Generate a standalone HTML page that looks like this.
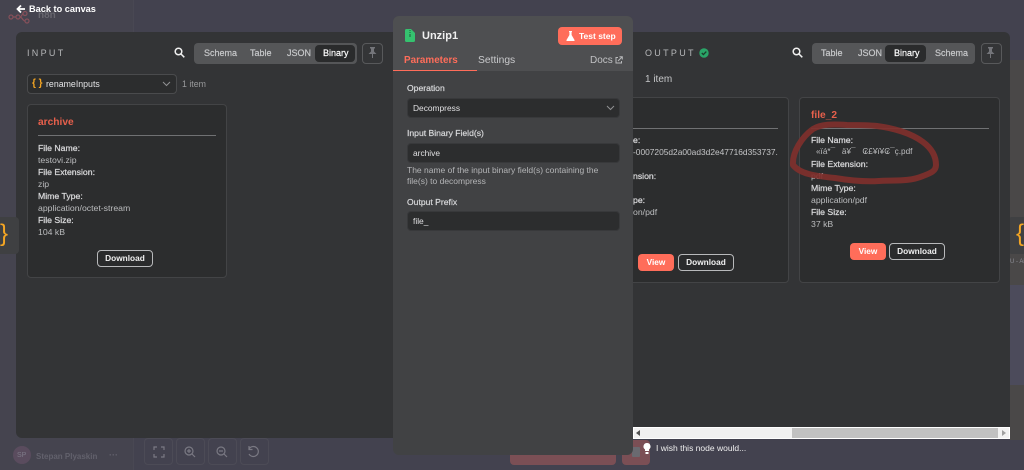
<!DOCTYPE html>
<html><head><meta charset="utf-8">
<style>
html,body{margin:0;padding:0}
body{width:1024px;height:470px;overflow:hidden;background:#43424f;position:relative;font-family:"Liberation Sans",sans-serif;color:#d8d8da}
div,span{position:absolute;white-space:nowrap;box-sizing:border-box}
.t{font-size:8.7px;line-height:12px}
.b{color:#d8d8da;-webkit-text-stroke:.25px #d8d8da}
.seg{background:#555658;border-radius:4px;height:21px;top:43px}
.tab{font-size:9px;color:#c8c9cb;top:47px;line-height:12px;-webkit-text-stroke:.2px #c8c9cb}
.act{background:#2a2b2c;border-radius:4px;height:17px;top:45px}
.pin{border:1px solid #58595b;border-radius:4px;width:21px;height:21px;top:43px;background:#343537}
.card{background:#2c2d2e;border:1px solid #434446;border-radius:4px}
.hr{height:1px;background:#707173}
.name{font-size:10.2px;font-weight:bold;color:#e8604c;line-height:14px}
.dl{border:1px solid #b8b9bb;background:#2a2b2c;border-radius:4px;font-size:8.3px;font-weight:bold;color:#f0f0f0;text-align:center;line-height:15px;height:17px;width:56px}
.view{background:#ff6d5a;border-radius:4px;font-size:8.3px;font-weight:bold;color:#fff;text-align:center;line-height:17px;height:17px;width:36px}
.lbl{font-size:8.6px;color:#d8d9db;line-height:12px;left:407px;-webkit-text-stroke:.2px #d8d9db}
.inp{left:407px;width:213px;height:20px;background:#2c2d2e;border:1px solid #38393b;border-radius:4px;font-size:8.4px;color:#e0e0e2;padding-left:5px;line-height:19px}
</style></head><body>
<!-- canvas -->
<div style="left:0;top:0;width:134px;height:470px;background:#45444f"></div>
<div style="left:133px;top:0;width:1px;height:470px;background:#494853"></div>
<svg style="position:absolute;left:8px;top:11px" width="26" height="14" viewBox="0 0 26 14" fill="none" stroke="#85505a" stroke-width="1.2"><circle cx="3" cy="6" r="2"/><circle cx="10" cy="6" r="2"/><circle cx="17" cy="2.500" r="2"/><circle cx="19" cy="10" r="2"/><path d="M5 6h3M12 6c2 0 2-3.500 3-3.500M12 6c2 0 3 4 5 4"/></svg>
<div style="left:38px;top:10px;font-size:10px;font-weight:bold;color:#68676f;line-height:12px">n8n</div>
<svg style="position:absolute;left:16px;top:4px" width="10" height="10" viewBox="0 0 10 10" fill="none" stroke="#fff" stroke-width="1.800"><path d="M9 5H2M5 1.500 1.500 5 5 8.500"/></svg>
<div style="left:29px;top:3px;font-size:9.2px;font-weight:bold;color:#fff;line-height:12px">Back to canvas</div>

<!-- bottom bar -->
<div style="left:13px;top:446px;width:18px;height:18px;border-radius:50%;background:#5a4c5e"></div>
<div style="left:17px;top:451px;font-size:7px;color:#7d7a88;line-height:9px">SP</div>
<div style="left:36px;top:451px;font-size:8px;font-weight:bold;color:#62616c;line-height:11px">Stepan Plyaskin</div>
<div style="left:109px;top:451px;font-size:9px;font-weight:bold;color:#62616c;line-height:9px">···</div>
<div style="left:144px;top:438px;width:29px;height:27px;border:1px solid #4c4b56;border-radius:4px"></div>
<div style="left:176px;top:438px;width:29px;height:27px;border:1px solid #4c4b56;border-radius:4px"></div>
<div style="left:208px;top:438px;width:29px;height:27px;border:1px solid #4c4b56;border-radius:4px"></div>
<div style="left:240px;top:438px;width:29px;height:27px;border:1px solid #4c4b56;border-radius:4px"></div>
<svg style="position:absolute;left:144px;top:438px" width="126" height="27" viewBox="0 0 126 27" fill="none" stroke="#7a7983" stroke-width="1.200"><path d="M10 12V9h3M17 9h3v3M20 16v3h-3M13 19h-3v-3"/><circle cx="45" cy="13" r="4"/><path d="M48 16l3 3M43 13h4M45 11v4"/><circle cx="77" cy="13" r="4"/><path d="M80 16l3 3M75 13h4"/><path d="M105 11a5 5 0 1 1 0 5M105 8v3.500h3.500"/></svg>

<div style="left:510px;top:440px;width:106px;height:25px;background:#7b4f55;border-radius:4px"></div>
<div style="left:622px;top:440px;width:28px;height:25px;background:#7b4f55;border-radius:4px"></div>
<div style="left:632px;top:447px;width:8px;height:10px;background:#6a6a70;border-radius:1px"></div>
<svg style="position:absolute;left:642px;top:442px" width="10" height="14" viewBox="0 0 10 14"><path d="M5 1a3.500 3.500 0 0 0-2 6.400V9h4V7.400A3.500 3.500 0 0 0 5 1z" fill="#fff"/><rect x="3.500" y="10" width="3" height="2" fill="#fff"/></svg>
<div style="left:656px;top:442px;font-size:8.5px;color:#eeeeee;line-height:12px">I wish this node would...</div>

<!-- right canvas pieces -->
<div style="left:1010px;top:60px;width:14px;height:380px;background:#4a4848"></div>
<div style="left:1010px;top:285px;width:14px;height:100px;background:#4c4b5b"></div>
<div style="left:1010px;top:258px;font-size:6px;color:#8d8d95;line-height:8px">U - Ai</div>
<div style="left:1008px;top:217px;width:16px;height:37px;background:#3f4042;border-radius:4px 0 0 4px"></div>
<div style="left:1016px;top:220px;font-size:24px;color:#f5a623;line-height:28px">{</div>

<!-- input panel -->
<div style="left:16px;top:32px;width:380px;height:406px;background:#333436;border-radius:6px 0 0 6px"></div>
<div style="left:0;top:217px;width:19px;height:37px;background:#3f4042;border-radius:0 4px 4px 0"></div>
<div style="left:0;top:220px;font-size:24px;color:#f5a623;line-height:28px">}</div>
<div style="left:27px;top:47px;font-size:9px;letter-spacing:2.3px;color:#b6b7b9;line-height:12px">INPUT</div>
<svg style="position:absolute;left:174px;top:47px" width="11" height="11" viewBox="0 0 11 11" fill="none" stroke="#f0f0f0" stroke-width="1.500"><circle cx="4.500" cy="4.500" r="3.300"/><path d="M7 7l3.300 3.300"/></svg>
<div class="seg" style="left:194px;width:163px"></div>
<div class="act" style="left:315px;width:40px"></div>
<div class="tab" style="left:204px">Schema</div>
<div class="tab" style="left:250px">Table</div>
<div class="tab" style="left:287px">JSON</div>
<div class="tab" style="left:323px;color:#fff;-webkit-text-stroke:.2px #fff">Binary</div>
<div class="pin" style="left:362px"></div>
<svg style="position:absolute;left:368px;top:47px" width="9" height="11" viewBox="0 0 9 11"><path d="M2 0h5v1L6 2v2.500L8.500 7H5v4H4V7H.5L3 4.500V2L2 1z" fill="#74757a"/></svg>
<div style="left:27px;top:74px;width:150px;height:20px;background:#2c2d2e;border:1px solid #4a4b4d;border-radius:4px"></div>
<div style="left:32px;top:77px;font-size:10px;font-weight:bold;color:#f5a623;line-height:13px">{ }</div>
<div style="left:46px;top:78px;font-size:8.8px;color:#e4e4e6;line-height:12px">renameInputs</div>
<svg style="position:absolute;left:162px;top:81px" width="9" height="6" viewBox="0 0 9 6" fill="none" stroke="#909193"><path d="M1 1l3.500 3.500L8 1"/></svg>
<div style="left:182px;top:78px;font-size:8.8px;color:#98999b;line-height:12px">1 item</div>
<div class="card" style="left:27px;top:104px;width:200px;height:174px"></div>
<div class="name" style="left:38px;top:116px">archive</div>
<div class="hr" style="left:38px;top:135px;width:178px"></div>
<div class="t b" style="left:38px;top:142px">File Name:</div>
<div class="t" style="left:38px;top:154px;color:#bcbdbf">testovi.zip</div>
<div class="t b" style="left:38px;top:166px">File Extension:</div>
<div class="t" style="left:38px;top:178px;color:#bcbdbf">zip</div>
<div class="t b" style="left:38px;top:190px">Mime Type:</div>
<div class="t" style="left:38px;top:202px;color:#bcbdbf">application/octet-stream</div>
<div class="t b" style="left:38px;top:214px">File Size:</div>
<div class="t" style="left:38px;top:226px;color:#bcbdbf">104 kB</div>
<div class="dl" style="left:97px;top:250px">Download</div>

<!-- output panel -->
<div style="left:620px;top:32px;width:390px;height:406px;background:#333436;border-radius:0 6px 6px 0"></div>
<div style="left:645px;top:47px;font-size:9px;letter-spacing:2.3px;color:#b6b7b9;line-height:12px">OUTPUT</div>
<svg style="position:absolute;left:699px;top:48px" width="10" height="10" viewBox="0 0 10 10"><circle cx="5" cy="5" r="4.700" fill="#2aa568"/><path d="M2.800 5l1.600 1.600L7.300 3.600" fill="none" stroke="#1c3b2b" stroke-width="1.300"/></svg>
<svg style="position:absolute;left:792px;top:47px" width="11" height="11" viewBox="0 0 11 11" fill="none" stroke="#f0f0f0" stroke-width="1.500"><circle cx="4.500" cy="4.500" r="3.300"/><path d="M7 7l3.300 3.300"/></svg>
<div class="seg" style="left:812px;width:163px"></div>
<div class="act" style="left:885px;width:41px"></div>
<div class="tab" style="left:821px">Table</div>
<div class="tab" style="left:858px">JSON</div>
<div class="tab" style="left:894px;color:#fff;-webkit-text-stroke:.2px #fff">Binary</div>
<div class="tab" style="left:935px">Schema</div>
<div class="pin" style="left:981px"></div>
<div style="left:645px;top:74px;font-size:10px;color:#c5c6c8;line-height:12px">1 item</div>
<svg style="position:absolute;left:986px;top:47px" width="9" height="11" viewBox="0 0 9 11"><path d="M2 0h5v1L6 2v2.500L8.500 7H5v4H4V7H.5L3 4.500V2L2 1z" fill="#74757a"/></svg>

<div class="card" style="left:600px;top:97px;width:189px;height:186px"></div>
<div class="hr" style="left:610px;top:128px;width:168px"></div>
<div class="t b" style="left:633px;top:134px">e:</div>
<div class="t" style="left:633px;top:146px;color:#c4c5c7;font-size:8.4px">-0007205d2a00ad3d2e47716d353737.</div>
<div class="t b" style="left:633px;top:170px">nsion:</div>
<div class="t b" style="left:633px;top:194px">pe:</div>
<div class="t" style="left:633px;top:206px;color:#bcbdbf">on/pdf</div>
<div class="view" style="left:638px;top:254px">View</div>
<div class="dl" style="left:678px;top:254px">Download</div>

<div class="card" style="left:799px;top:97px;width:201px;height:186px"></div>
<div class="name" style="left:811px;top:109px">file_2</div>
<div class="hr" style="left:811px;top:128px;width:178px"></div>
<div class="t b" style="left:811px;top:134px">File Name:</div>
<div class="t" style="left:816px;top:146px;color:#bcbdbf;font-size:8.2px">«ïá*¯&nbsp;&nbsp;&nbsp;ä¥¯&nbsp;&nbsp;&nbsp;₢£¥ï¥₢¯ç.pdf</div>
<div class="t b" style="left:811px;top:158px">File Extension:</div>
<div class="t" style="left:811px;top:170px;color:#bcbdbf">pdf</div>
<div class="t b" style="left:811px;top:182px">Mime Type:</div>
<div class="t" style="left:811px;top:194px;color:#bcbdbf">application/pdf</div>
<div class="t b" style="left:811px;top:206px">File Size:</div>
<div class="t" style="left:811px;top:218px;color:#bcbdbf">37 kB</div>
<div class="view" style="left:850px;top:243px">View</div>
<div class="dl" style="left:889px;top:243px">Download</div>
<svg style="position:absolute;left:785px;top:118px" width="160" height="70" viewBox="0 0 160 70" fill="none"><path d="M62 7C48 6 36 6 28 11 17 19 7 34 8 47 15 56 30 58 50 60 62 62 80 64 94 63 108 62 124 64 138 58 146 55 151 53 151 47 151 37 146 30 138 24 126 15 108 10 92 8 82 7 72 7 62 7z" stroke="#7f302d" stroke-width="6" stroke-linejoin="round" opacity=".92"/></svg>

<!-- scrollbar -->
<div style="left:633px;top:427px;width:377px;height:12px;background:#fff"></div>
<div style="left:634px;top:428px;width:375px;height:10px;background:#f1f1f1"></div>
<div style="left:792px;top:428px;width:206px;height:10px;background:#c1c1c1"></div>
<svg style="position:absolute;left:636px;top:430px" width="5" height="6" viewBox="0 0 5 6"><path d="M4 0v6L0 3z" fill="#505050"/></svg>
<svg style="position:absolute;left:1002px;top:430px" width="5" height="6" viewBox="0 0 5 6"><path d="M0 0v6l4-3z" fill="#a0a0a0"/></svg>

<!-- middle panel -->
<div style="left:393px;top:16px;width:240px;height:439px;background:#414244;border-radius:6px"></div>
<div style="left:393px;top:16px;width:240px;height:55px;background:#4e4f51;border-radius:6px 6px 0 0"></div>
<svg style="position:absolute;left:405px;top:29px" width="10" height="13" viewBox="0 0 10 13"><path d="M0 1.500A1.500 1.500 0 0 1 1.500 0H6l4 4v7.500A1.500 1.500 0 0 1 8.500 13h-7A1.500 1.500 0 0 1 0 11.500z" fill="#35c26f"/><path d="M4.500 1h1v1h-1zM4.500 3h1v1h-1zM4.500 5h1v3h-1z" fill="#1b5a38"/></svg>
<div style="left:422px;top:29px;font-size:11px;font-weight:bold;color:#f0f0f0;line-height:14px">Unzip1</div>
<div style="left:558px;top:27px;width:64px;height:18px;background:#ff6d5a;border-radius:4px"></div>
<svg style="position:absolute;left:566px;top:31px" width="9" height="10" viewBox="0 0 9 10"><path d="M3 0h3v1h-.4v3L8.500 9v1H.5V9l2.900-5V1H3z" fill="#fff"/></svg>
<div style="left:579px;top:30px;font-size:8.500px;font-weight:bold;color:#fff;line-height:12px">Test step</div>
<div style="left:404px;top:54px;font-size:9.900px;font-weight:bold;color:#ff6d5a;line-height:13px">Parameters</div>
<div style="left:478px;top:54px;font-size:10.300px;color:#c9cacc;line-height:13px">Settings</div>
<div style="left:590px;top:54px;font-size:10px;color:#c0c1c3;line-height:13px">Docs</div>
<svg style="position:absolute;left:615px;top:56px" width="8" height="8" viewBox="0 0 8 8" fill="none" stroke="#b8b9bb"><path d="M3 1.500H1v5.500h5.500V5M3 5l4-4M4.500 .7H7.300V3.500"/></svg>
<div style="left:393px;top:70px;width:84px;height:1px;background:#ff6d5a"></div>
<div class="lbl" style="top:82px">Operation</div>
<div class="inp" style="top:98px">Decompress</div>
<svg style="position:absolute;left:606px;top:105px" width="9" height="6" viewBox="0 0 9 6" fill="none" stroke="#909193"><path d="M1 1l3.500 3.500L8 1"/></svg>
<div class="lbl" style="top:127px">Input Binary Field(s)</div>
<div class="inp" style="top:143px">archive</div>
<div style="left:407px;top:165px;font-size:8.500px;line-height:11px;color:#b4b5b7">The name of the input binary field(s) containing the<br>file(s) to decompress</div>
<div class="lbl" style="top:196px">Output Prefix</div>
<div class="inp" style="top:211px">file_</div>
</body></html>
